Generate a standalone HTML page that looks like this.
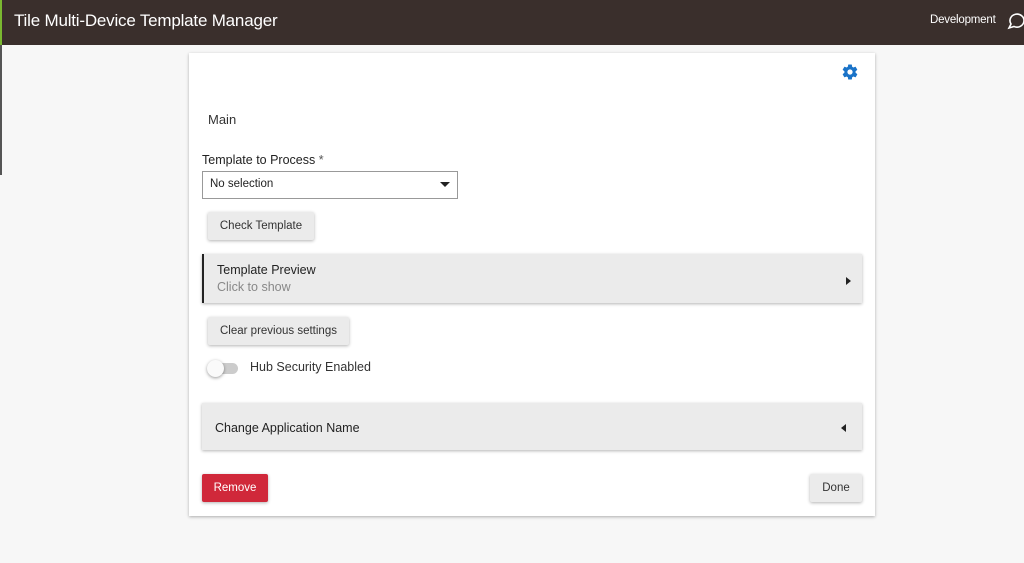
<!DOCTYPE html>
<html><head><meta charset="utf-8"><style>
*{box-sizing:border-box;margin:0;padding:0}
body{width:1024px;height:563px;background:#f7f7f7;font-family:"Liberation Sans",sans-serif;position:relative;overflow:hidden;color:#222}
.hdr{position:absolute;left:0;top:0;width:1024px;height:45px;background:#3a2f2c;border-left:2px solid #7ab830}
.hdr .t{position:absolute;left:12px;top:11px;color:#fff;font-size:17px;letter-spacing:-0.2px}
.hdr .d{position:absolute;left:928px;top:14px;color:#fff;font-size:11.5px;letter-spacing:-0.2px}
.ab{position:absolute}
.card{left:189px;top:53px;width:686px;height:463px;background:#fff;box-shadow:0 1px 3px rgba(0,0,0,.3)}
.btn{position:absolute;background:#ebebeb;box-shadow:0 1px 3px rgba(0,0,0,.3);font-size:11.5px;color:#333;text-align:center;border-radius:2px}
.panel{position:absolute;left:202px;width:660px;background:#ebebeb;box-shadow:0 1px 3px rgba(0,0,0,.3)}
</style></head><body>
<div class="hdr"><div class="t">Tile Multi-Device Template Manager</div><div class="d">Development</div>
<svg class="ab" style="left:1004px;top:11px" width="20" height="20" viewBox="0 0 20 20"><path d="M3 17 L5 13 A7 6.5 0 1 1 8 15.5 Z" fill="none" stroke="#fff" stroke-width="1.6"/></svg></div>
<div class="ab" style="left:0;top:45px;width:2px;height:130px;background:#555"></div>
<div class="ab card"></div>
<svg class="ab" style="left:841px;top:63px" width="18" height="18" viewBox="0 0 24 24"><path fill="#1a73c8" d="M19.4 13c.04-.32.06-.66.06-1s-.02-.68-.06-1l2.1-1.650c.2-.15.24-.42.12-.64l-2-3.46c-.12-.22-.39-.3-.61-.22l-2.49 1c-.52-.4-1.080-.73-1.690-.98l-.38-2.65A.49.49 0 0 0 14 2h-4c-.25 0-.46.18-.49.42l-.38 2.65c-.61.25-1.17.59-1.69.98l-2.49-1c-.23-.09-.49 0-.61.22l-2 3.46c-.13.22-.07.49.12.64L4.57 11c-.04.32-.07.66-.07 1s.03.68.07 1l-2.11 1.65c-.19.15-.24.42-.12.64l2 3.46c.12.22.39.3.61.22l2.49-1c.52.4 1.08.73 1.69.98l.38 2.65c.03.24.24.42.49.42h4c.25 0 .46-.18.49-.42l.38-2.65c.61-.25 1.17-.59 1.69-.98l2.49 1c.23.09.49 0 .61-.22l2-3.46c.12-.22.07-.49-.12-.64L19.4 13zM12 15.5A3.5 3.5 0 1 1 12 8.5a3.5 3.5 0 0 1 0 7z"/></svg>
<div class="ab" style="left:208px;top:112px;font-size:13px;color:#333">Main</div>
<div class="ab" style="left:202px;top:153px;font-size:12.5px;color:#222">Template to Process <span style="color:#555">*</span></div>
<div class="ab" style="left:202px;top:171px;width:256px;height:28px;border:1px solid #999;background:#fff;font-size:11.5px;padding:6px 7px">No selection</div>
<div class="ab" style="left:440px;top:182px;border-left:5px solid transparent;border-right:5px solid transparent;border-top:5px solid #222"></div>
<div class="btn" style="left:208px;top:212px;width:106px;height:28px;line-height:28px">Check Template</div>
<div class="panel" style="top:254px;height:49px;border-left:2px solid #222">
<div class="ab" style="left:13px;top:9px;font-size:12.5px;color:#222">Template Preview</div>
<div class="ab" style="left:13px;top:26px;font-size:12.5px;color:#888">Click to show</div>
<div class="ab" style="left:642px;top:23px;border-top:4px solid transparent;border-bottom:4px solid transparent;border-left:5px solid #222"></div></div>
<div class="btn" style="left:208px;top:317px;width:141px;height:28px;line-height:28px">Clear previous settings</div>
<div class="ab" style="left:212px;top:363px;width:26px;height:11px;border-radius:6px;background:#ccc"></div>
<div class="ab" style="left:207px;top:360px;width:17px;height:17px;border-radius:50%;background:#fafafa;box-shadow:0 1px 3px rgba(0,0,0,.4)"></div>
<div class="ab" style="left:250px;top:360px;font-size:12.5px;color:#333">Hub Security Enabled</div>
<div class="panel" style="top:403px;height:47px">
<div class="ab" style="left:13px;top:18px;font-size:12.5px;color:#222">Change Application Name</div>
<div class="ab" style="left:639px;top:21px;border-top:4px solid transparent;border-bottom:4px solid transparent;border-right:5px solid #222"></div></div>
<div class="btn" style="left:202px;top:474px;width:66px;height:28px;line-height:28px;background:#d0283a;color:#fff">Remove</div>
<div class="btn" style="left:810px;top:474px;width:52px;height:28px;line-height:28px">Done</div>
</body></html>
